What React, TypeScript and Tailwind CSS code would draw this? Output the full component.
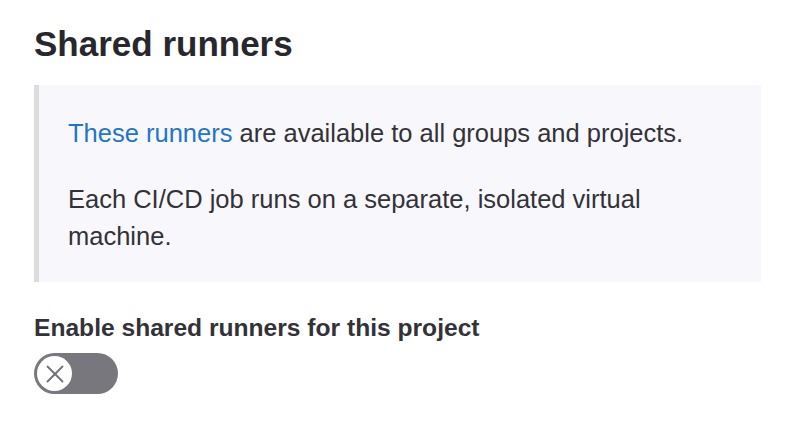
import { X } from "lucide-react";

const App = () => {
  return (
    <div className="min-h-[421px] w-[800px] bg-white pl-[34px] pr-[39px] pt-[23px] font-['Liberation_Sans',Arial,sans-serif] text-[#333238]">
      <h2 className="text-[35px] font-bold leading-[42px] text-[#28272d]">Shared runners</h2>

      <div className="mt-[20px] border-l-[5px] border-[#dcdcde] bg-[#f8f8fc] pl-[29px] pr-[29px] pt-[30px] pb-[27px] text-[25.5px] leading-[37px]">
        <p>
          <a href="#" className="text-[#1f75cb]">These runners</a> are available to all groups and projects.
        </p>
        <p className="mt-[29px]">Each CI/CD job runs on a separate, isolated virtual machine.</p>
      </div>

      <div className="mt-[27px] text-[24.6px] font-bold leading-[37px] text-[#333238]">
        Enable shared runners for this project
      </div>

      <button
        type="button"
        className="mt-[7px] flex h-[41px] w-[84px] items-center rounded-full bg-[#78777d] p-[3px]"
      >
        <span className="flex h-[35px] w-[35px] items-center justify-center rounded-full bg-white">
          <X className="h-[30px] w-[30px] text-[#737278]" strokeWidth={1.5} />
        </span>
      </button>
    </div>
  );
};

export default App;
